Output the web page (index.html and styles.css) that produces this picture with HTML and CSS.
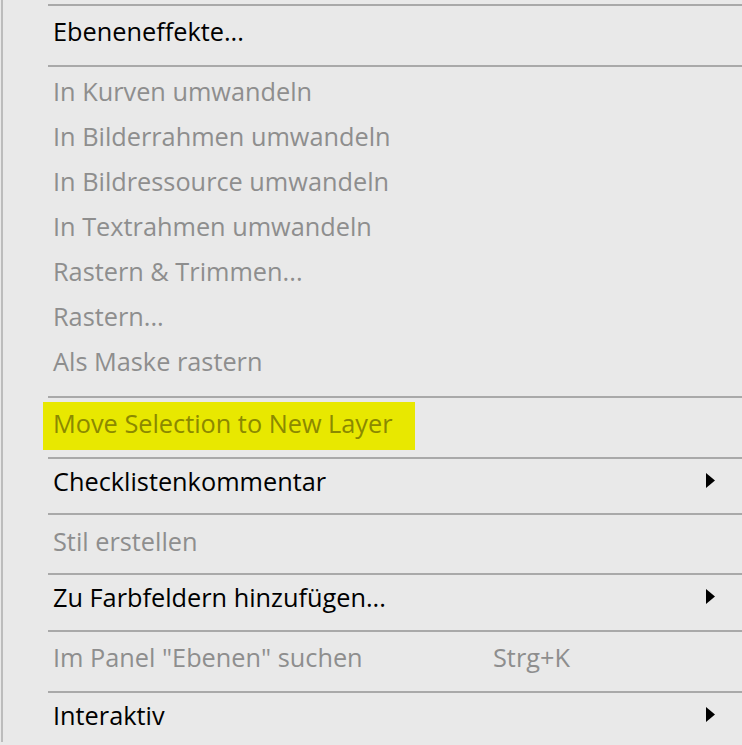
FILE: index.html
```html
<!DOCTYPE html>
<html lang="de">
<head>
<meta charset="utf-8">
<title>Kontextmenü</title>
<link rel="stylesheet" href="styles.css">
</head>
<body>
<div class="menu">
  <div class="sep"></div>
  <div class="group">
    <div class="item">Ebeneneffekte...</div>
  </div>
  <div class="sep"></div>
  <div class="group group--list">
    <div class="item item--off">In Kurven umwandeln</div>
    <div class="item item--off">In Bilderrahmen umwandeln</div>
    <div class="item item--off">In Bildressource umwandeln</div>
    <div class="item item--off">In Textrahmen umwandeln</div>
    <div class="item item--off">Rastern &amp; Trimmen...</div>
    <div class="item item--off">Rastern...</div>
    <div class="item item--off">Als Maske rastern</div>
  </div>
  <div class="sep"></div>
  <div class="group group--mark">
    <div class="item item--off item--mark"><span class="mark">Move Selection to New Layer</span></div>
  </div>
  <div class="sep"></div>
  <div class="group group--low">
    <div class="item"><span>Checklistenkommentar</span><span></span><svg class="arrow" width="9" height="15" viewBox="0 0 9 15"><polygon points="0,0 9,7.5 0,15" fill="#000"/></svg></div>
  </div>
  <div class="sep"></div>
  <div class="group group--high">
    <div class="item item--off">Stil erstellen</div>
  </div>
  <div class="sep"></div>
  <div class="group group--low-wide">
    <div class="item"><span>Zu Farbfeldern hinzufügen...</span><span></span><svg class="arrow" width="9" height="15" viewBox="0 0 9 15"><polygon points="0,0 9,7.5 0,15" fill="#000"/></svg></div>
  </div>
  <div class="sep"></div>
  <div class="group">
    <div class="item item--off"><span>Im Panel "Ebenen" suchen</span><span class="shortcut">Strg+K</span></div>
  </div>
  <div class="sep"></div>
  <div class="group group--last">
    <div class="item"><span>Interaktiv</span><span></span><svg class="arrow" width="9" height="15" viewBox="0 0 9 15"><polygon points="0,0 9,7.5 0,15" fill="#000"/></svg></div>
  </div>
</div>
</body>
</html>
```
FILE: styles.css
```css
html, body {
  margin: 0;
  padding: 0;
  background: #e9e9e9;
}

body {
  font-family: "Open Sans", "Noto Sans", sans-serif;
  font-size: 25.3px;
  color: #000;
}

.menu {
  margin-left: 1px;
  border-left: 2px solid #bcbcbc;
  background: #e9e9e9;
  min-height: 742px;
  padding-top: 4px;
  box-sizing: border-box;
  overflow: hidden;
}

.sep {
  height: 2px;
  margin-left: 45px;
  background: #a9a9a9;
}

.group {
  padding: 3px 0 11px;
}

.group--list {
  padding: 2px 0 12px;
}

.group--mark {
  padding: 4px 0 7px;
}

.group--low {
  padding: 0 0 9px;
}

.group--low-wide {
  padding: 0 0 10px;
}

.group--high {
  padding: 4px 0 9px;
}

.group--last {
  padding: 0;
}

.item {
  display: grid;
  grid-template-columns: 440px 1fr auto;
  align-items: center;
  height: 45px;
  line-height: 45px;
  padding: 0 27px 0 50px;
  white-space: nowrap;
}

.item--off {
  color: #8e8e8e;
}

.item--mark {
  display: block;
  height: 48px;
  line-height: 42px;
  padding-left: 40px;
}

.mark {
  display: inline-block;
  height: 48px;
  padding: 0 22px 6px 10px;
  box-sizing: border-box;
  background: #e8e800;
  color: #8b8900;
}

.shortcut {
  grid-column: 2;
}

.arrow {
  grid-column: 3;
  display: block;
  margin-bottom: 2px;
}
```
